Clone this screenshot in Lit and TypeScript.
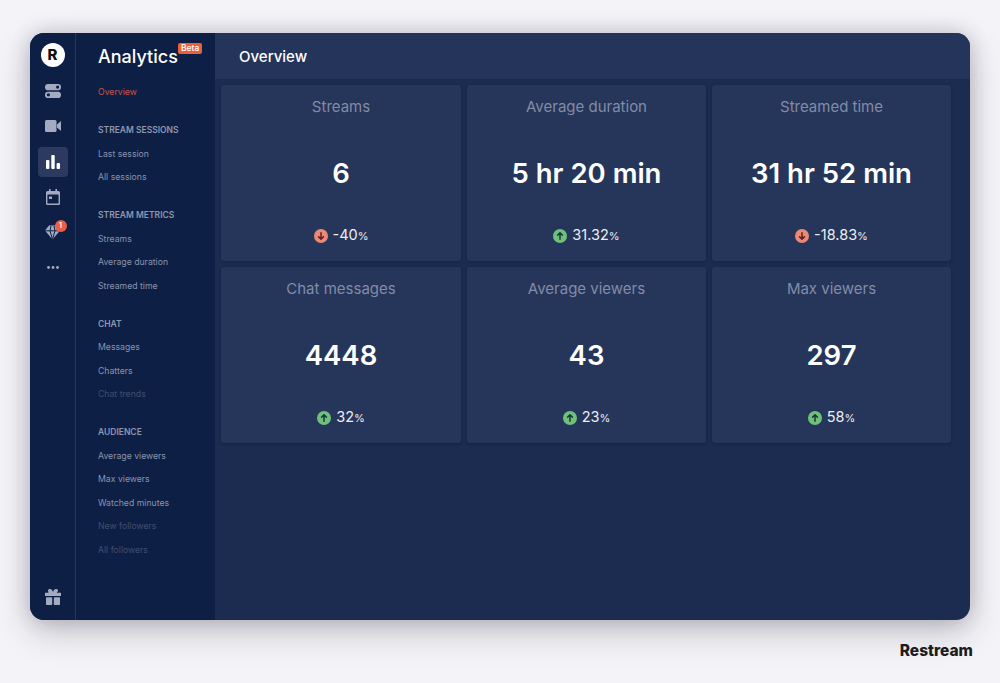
import { LitElement, html, css, svg } from "lit";
import { customElement } from "lit/decorators.js";

const cards = [
  { t: "Streams", v: "6", d: "-40", up: false },
  { t: "Average duration", v: "5 hr 20 min", d: "31.32", up: true },
  { t: "Streamed time", v: "31 hr 52 min", d: "-18.83", up: false },
  { t: "Chat messages", v: "4448", d: "32", up: true },
  { t: "Average viewers", v: "43", d: "23", up: true },
  { t: "Max viewers", v: "297", d: "58", up: true },
];

const groups = [
  { h: "STREAM SESSIONS", items: [["Last session"], ["All sessions"]] },
  { h: "STREAM METRICS", items: [["Streams"], ["Average duration"], ["Streamed time"]] },
  { h: "CHAT", items: [["Messages"], ["Chatters"], ["Chat trends", 1]] },
  { h: "AUDIENCE", items: [["Average viewers"], ["Max viewers"], ["Watched minutes"], ["New followers", 1], ["All followers", 1]] },
];

const toggles = svg`<svg width="16" height="14" viewBox="0 0 16 14"><rect y="0" width="16" height="6.3" rx="3.1" fill="#a4abc0"/><rect y="7.7" width="16" height="6.3" rx="3.1" fill="#a4abc0"/><circle cx="12.6" cy="3.1" r="1.6" fill="#0e1f45"/><circle cx="3.4" cy="10.8" r="1.6" fill="#0e1f45"/></svg>`;
const camera = svg`<svg width="16" height="12" viewBox="0 0 16 12"><rect y="0" width="11.5" height="12" rx="1.5" fill="#a4abc0"/><path d="M12 4.5 16 1v10l-4-3.5z" fill="#a4abc0"/></svg>`;
const bars = svg`<svg width="14" height="14" viewBox="0 0 14 14"><rect x="0" y="5" width="3.4" height="9" rx="1" fill="#fff"/><rect x="5.3" y="0" width="3.4" height="14" rx="1" fill="#fff"/><rect x="10.6" y="8" width="3.4" height="6" rx="1" fill="#fff"/></svg>`;
const calendar = svg`<svg width="14" height="16" viewBox="0 0 14 16"><path d="M3 0h1.6v2h4.8V0H11v2h1.5A1.5 1.5 0 0 1 14 3.500v11a1.500 1.500 0 0 1-1.500 1.500h-11A1.500 1.500 0 0 1 0 14.500v-11A1.500 1.500 0 0 1 1.500 2H3z" fill="#a4abc0"/><rect x="1.400" y="5.500" width="11.200" height="9" rx=".6" fill="#0e1f45"/><rect x="3" y="7.500" width="3" height="2.500" fill="#a4abc0"/></svg>`;
const gem = svg`<svg width="15" height="15" viewBox="0 0 15 15"><path d="M4 .5h7l3.600 4.500-.4 1.500L7.500 14.500.8 6.500.4 5z" fill="#a4abc0"/><path d="M.4 5.800h14.200M5 5.800l2.500 8.500 2.500-8.500M5 5.800 6 1M10 5.800 9 1" fill="none" stroke="#0e1f45" stroke-width="1"/></svg>`;
const dots = svg`<svg width="12" height="3" viewBox="0 0 12 3"><circle cx="1.500" cy="1.500" r="1.400" fill="#a4abc0"/><circle cx="6" cy="1.500" r="1.400" fill="#a4abc0"/><circle cx="10.500" cy="1.500" r="1.400" fill="#a4abc0"/></svg>`;
const gift = svg`<svg width="16" height="16" viewBox="0 0 16 16"><path d="M3 1.500C3 .5 4 0 5 0c1.400 0 2.400 1.300 3 3 .6-1.700 1.600-3 3-3 1 0 2 .5 2 1.500 0 1-.6 1.800-1.500 2.300H16V7H0V3.800h3.500C3.600 3.300 3 2.500 3 1.500z" fill="#a4abc0"/><rect x="1" y="8.200" width="6.200" height="7.800" rx=".8" fill="#a4abc0"/><rect x="8.800" y="8.200" width="6.200" height="7.800" rx=".8" fill="#a4abc0"/></svg>`;
const arrow = (up: boolean) => svg`<svg width="14" height="14" viewBox="0 0 14 14"><circle cx="7" cy="7" r="7" fill="${up ? "#6fc07c" : "#ea8a74"}"/><path d="${up ? "M7 10.800V4M4.200 6.600 7 3.800l2.800 2.800" : "M7 3.200V10M4.200 7.400 7 10.200l2.800-2.800"}" fill="none" stroke="${up ? "#16392f" : "#5b1f24"}" stroke-width="1.500"/></svg>`;

@customElement("app-root")
export class AppRoot extends LitElement {
  static styles = css`
    :host { display: block; height: 683px; background: #f4f3f7; font-family: Inter, "Noto Sans", sans-serif; overflow: hidden; }
    .page { padding: 33px 30px 0; display: flex; flex-direction: column; }
    .frame { height: 587px; display: flex; border-radius: 14px; overflow: hidden; background: #1b2c50; box-shadow: 0 12px 34px rgba(30, 30, 50, .22), 0 0 20px rgba(30, 30, 50, .2); }
    .rail { width: 45px; flex: none; background: #0e1f45; border-right: 1px solid #26375b; display: flex; flex-direction: column; align-items: center; padding-top: 10px; box-sizing: content-box; }
    .logo { width: 24px; height: 24px; border-radius: 50%; background: #fff; color: #111; font: 800 15px/24px Inter, sans-serif; text-align: center; margin-bottom: 9px; flex: none; }
    .ri { position: relative; width: 30px; height: 30px; display: flex; align-items: center; justify-content: center; margin-bottom: 5.400px; border-radius: 4px; flex: none; }
    .ri.on { background: #2b3a5e; }
    .badge { position: absolute; right: 1px; top: 2px; width: 12px; height: 12px; border-radius: 50%; background: #ea5f45; color: #fff; font-size: 7px; line-height: 12px; font-weight: 600; text-align: center; }
    .spacer { flex: 1; }
    .ri.gift { margin-bottom: 8px; }
    .side { width: 139px; flex: none; background: #0e1f45; padding: 0 0 0 22px; box-sizing: border-box; }
    .brand { height: 46px; display: flex; align-items: center; position: relative; color: #fff; font-size: 18px; font-weight: 500; }
    .beta { position: absolute; left: 80px; top: 10px; background: #e8603f; color: #fff; font-size: 8.500px; font-weight: 500; line-height: 11px; padding: 0 3px; border-radius: 2px; }
    .ov { color: #c5584f; font-size: 8.700px; line-height: 12px; margin-top: 7px; margin-bottom: 26px; }
    .group { margin-bottom: 26px; }
    .gh { color: #8e97ae; font-size: 8.500px; font-weight: 600; line-height: 12px; margin-bottom: 11.500px; }
    .it { color: #8a94ad; font-size: 8.700px; line-height: 12px; margin-bottom: 11.500px; }
    .it.dim { color: #3f4e70; }
    .main { flex: 1; display: flex; flex-direction: column; min-width: 0; }
    .top { height: 46px; flex: none; background: #24345a; color: #fff; font-size: 15px; font-weight: 500; display: flex; align-items: center; padding-left: 24px; }
    .grid { display: grid; grid-template-columns: 240px 239px 239px; grid-auto-rows: 176px; gap: 6px; padding: 6px 0 0 6px; }
    .card { background: #26355a; border-radius: 3px; box-shadow: 0 1px 3px rgba(10, 20, 50, .35); display: flex; flex-direction: column; align-items: center; }
    .ct { color: #828ca6; font-size: 15px; line-height: 20px; margin-top: 11.500px; }
    .cv { color: #fff; font-size: 27.500px; font-weight: 600; line-height: 34px; margin-top: 39px; }
    .cd { display: flex; align-items: center; gap: 5px; color: #eceef3; font-size: 14.500px; line-height: 18px; margin-top: 36.500px; }
    .pc { font-size: 11px; }
    .foot { align-self: flex-end; margin-right: -3px; margin-top: 22px; color: #1c1c20; font: 800 15.500px/18px Inter, sans-serif; }
  `;

  render() {
    return html`<div class="page">
      <div class="frame">
        <nav class="rail">
          <div class="logo">R</div>
          <div class="ri">${toggles}</div>
          <div class="ri">${camera}</div>
          <div class="ri on">${bars}</div>
          <div class="ri">${calendar}</div>
          <div class="ri">${gem}<span class="badge">1</span></div>
          <div class="ri">${dots}</div>
          <div class="spacer"></div>
          <div class="ri gift">${gift}</div>
        </nav>
        <aside class="side">
          <div class="brand">Analytics<span class="beta">Beta</span></div>
          <div class="ov">Overview</div>
          ${groups.map(g => html`<div class="group">
            <div class="gh">${g.h}</div>
            ${g.items.map(i => html`<div class="it ${i[1] ? "dim" : ""}">${i[0]}</div>`)}
          </div>`)}
        </aside>
        <main class="main">
          <div class="top">Overview</div>
          <div class="grid">
            ${cards.map(c => html`<div class="card">
              <div class="ct">${c.t}</div>
              <div class="cv">${c.v}</div>
              <div class="cd">${arrow(c.up)}<span>${c.d}<span class="pc">%</span></span></div>
            </div>`)}
          </div>
        </main>
      </div>
      <div class="foot">Restream</div>
    </div>`;
  }
}
